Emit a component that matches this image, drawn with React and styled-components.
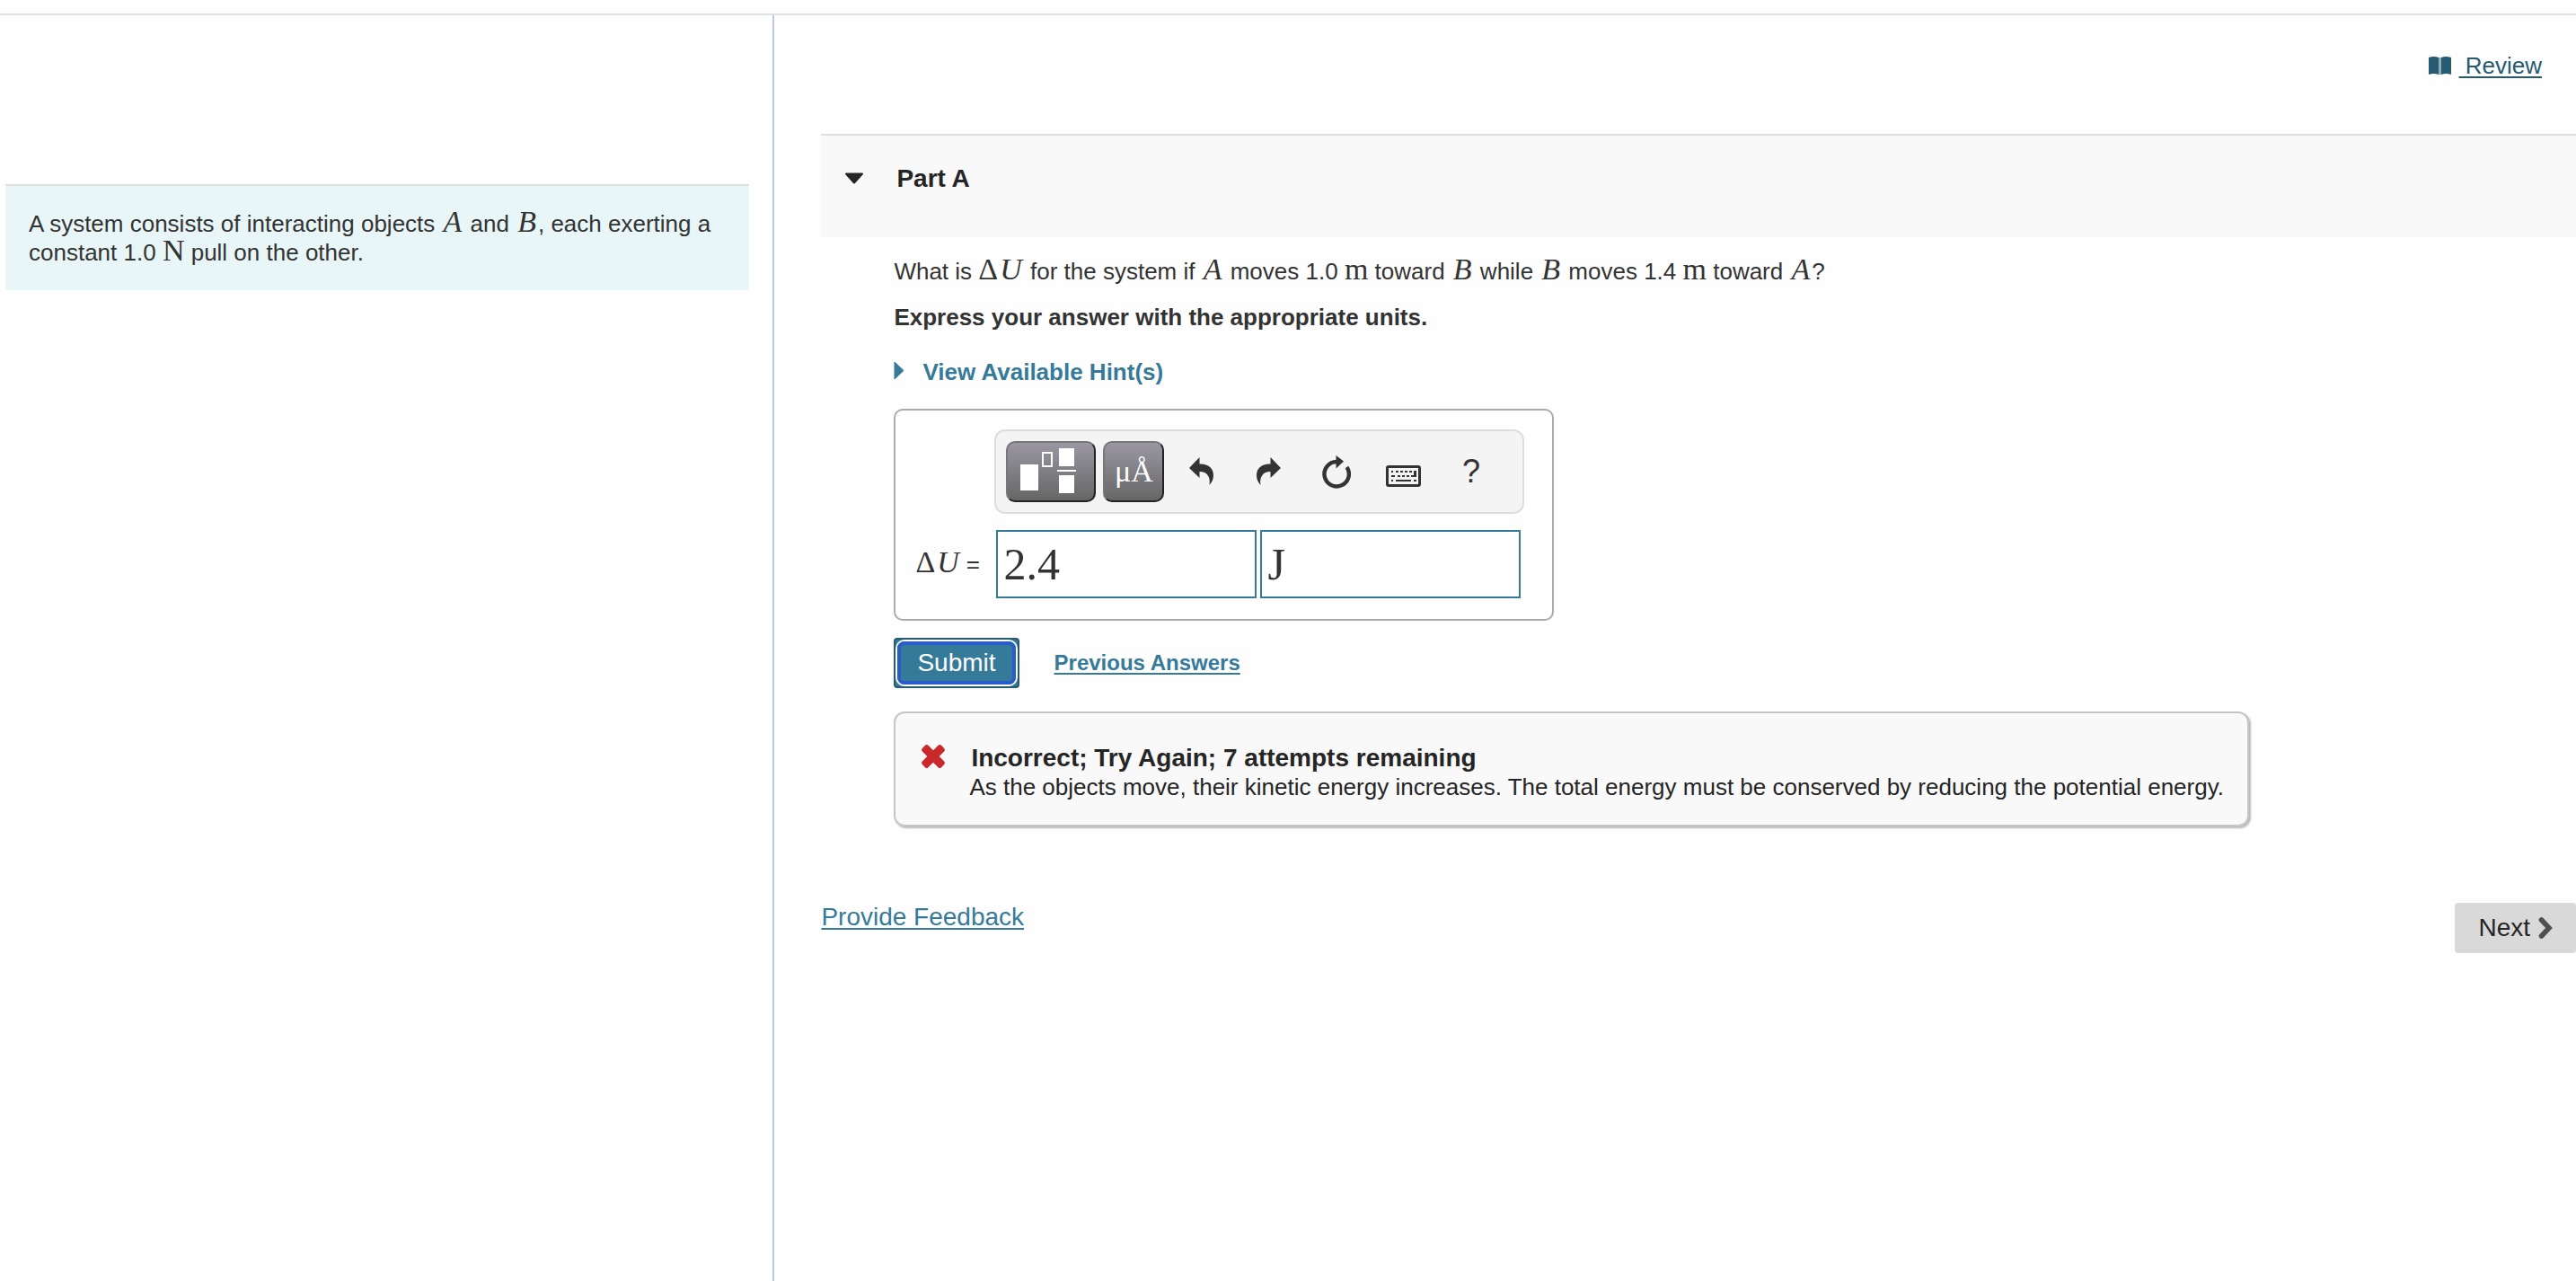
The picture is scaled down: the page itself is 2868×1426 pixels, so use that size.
import React, { useState } from 'react';
import styled, { createGlobalStyle } from 'styled-components';

const GlobalStyle = createGlobalStyle`
  * {
    box-sizing: border-box;
  }
  body {
    margin: 0;
    background: #fefefe;
    color: #333;
    font: 26px/32px 'Liberation Sans', Arial, sans-serif;
  }
  p,
  h2 {
    margin: 0;
  }
  button,
  input {
    font-family: inherit;
    color: inherit;
  }
`;

function App() {
  const [value, setValue] = useState('2.4');
  const [units, setUnits] = useState('J');

  return (
    <>
      <GlobalStyle />
      <Page>
        <Sidebar>
          <Problem>
            A system consists of interacting objects <Var>A</Var> and{' '}
            <Var>B</Var>, each exerting a constant 1.0 <Unit>N</Unit> pull on
            the other.
          </Problem>
        </Sidebar>
        <Main>
          <TopRow>
            <BookIcon />
            <ReviewLink href="#review">&nbsp;Review</ReviewLink>
          </TopRow>
          <PartHeader>
            <Toggle aria-label="Collapse Part A">
              <svg width="22" height="13" viewBox="0 0 22 13">
                <path d="M2 1.500h18L11 11.500z" fill="#252525" stroke="#252525" strokeWidth="2" strokeLinejoin="round" />
              </svg>
            </Toggle>
            <PartTitle>Part A</PartTitle>
          </PartHeader>
          <PartBody>
            <Question>
              What is <Unit>Δ</Unit>
              <Var>U</Var> for the system if <Var>A</Var> moves 1.0{' '}
              <Unit>m</Unit> toward <Var>B</Var> while <Var>B</Var> moves 1.4{' '}
              <Unit>m</Unit> toward <Var>A</Var>?
            </Question>
            <Instructions>Express your answer with the appropriate units.</Instructions>
            <HintButton>
              <svg width="12" height="21" viewBox="0 0 12 21">
                <path d="M1 1l10 9.500L1 20z" fill="#367a99" stroke="#367a99" strokeLinejoin="round" />
              </svg>
              View Available Hint(s)
            </HintButton>
            <AnswerBox>
              <Toolbar>
                <PaletteButton $wide aria-label="Templates">
                  <TemplateIcon />
                </PaletteButton>
                <PaletteButton>μÅ</PaletteButton>
                <IconButton aria-label="Undo">
                  <CurvedArrow />
                </IconButton>
                <IconButton aria-label="Redo">
                  <CurvedArrow flip />
                </IconButton>
                <IconButton aria-label="Reset">
                  <ResetIcon />
                </IconButton>
                <IconButton aria-label="Keyboard shortcuts">
                  <KeyboardIcon />
                </IconButton>
                <IconButton>?</IconButton>
              </Toolbar>
              <AnswerLabel htmlFor="value">
                <span>
                  <Unit>Δ</Unit>
                  <Var>U</Var>
                </span>
                <span>=</span>
              </AnswerLabel>
              <Fields>
                <AnswerInput id="value" value={value} onChange={(e) => setValue(e.target.value)} />
                <AnswerInput aria-label="Units" value={units} onChange={(e) => setUnits(e.target.value)} />
              </Fields>
            </AnswerBox>
            <Actions>
              <SubmitButton>
                <SubmitRing>Submit</SubmitRing>
              </SubmitButton>
              <PreviousLink href="#previous">Previous Answers</PreviousLink>
            </Actions>
            <Feedback>
              <CrossIcon />
              <div>
                <FeedbackTitle>Incorrect; Try Again; 7 attempts remaining</FeedbackTitle>
                <p>
                  As the objects move, their kinetic energy increases. The total
                  energy must be conserved by reducing the potential energy.
                </p>
              </div>
            </Feedback>
          </PartBody>
          <Footer>
            <FeedbackLink href="#feedback">Provide Feedback</FeedbackLink>
            <NextButton>
              Next
              <svg width="16" height="26" viewBox="0 0 16 26">
                <path d="M3.500 4l8.500 9-8.500 9" fill="none" stroke="#505050" strokeWidth="5.600" strokeLinecap="round" />
              </svg>
            </NextButton>
          </Footer>
        </Main>
      </Page>
    </>
  );
}

export default App;

function BookIcon() {
  return (
    <svg width="25" height="21" viewBox="0 0 25 21">
      <path d="M0 1Q6 -1 11 1V20Q6 18 0 20zM14 1Q19 -1 25 1V20Q19 18 14 20z" fill="#255a70" />
      <path d="M11 1h3v19h-3z" fill="#8fabb7" />
    </svg>
  );
}

function TemplateIcon() {
  return (
    <svg width="68" height="52" viewBox="0 0 68 52" fill="#fff">
      <path d="M0 18h20v29H0zM43 0h17v20H43zM41 24h21v2H41zM43 30h17v20H43z" />
      <path d="M25 5h10v15H25z" fill="none" stroke="#fff" strokeWidth="2" />
    </svg>
  );
}

function CurvedArrow({ flip }) {
  return (
    <svg width="27" height="32" viewBox="0 0 27 32">
      <path
        d="M0 12L11.500 0V7.500C21 7 27 12 27 20C27 25 25 28 22.500 31C24 22 20 16 11.500 16V23z"
        fill="#333"
        transform={flip ? 'translate(27 0) scale(-1 1)' : undefined}
      />
    </svg>
  );
}

function ResetIcon() {
  return (
    <svg width="32" height="37" viewBox="0 0 32 37">
      <path d="M16 7A13.700 13.700 0 1 0 27.500 13" fill="none" stroke="#333" strokeWidth="4.400" />
      <path d="M15.500 0l8.500 6.500-8.500 8z" fill="#333" />
    </svg>
  );
}

function KeyboardIcon() {
  return (
    <svg width="39" height="34" viewBox="0 -10 39 34">
      <rect x="1.500" y="1.500" width="36" height="21" rx="1.500" fill="none" stroke="#333" strokeWidth="3" />
      <path
        d="M6 6h2v2H6zM11 6h3v2h-3zM16 6h3v2h-3zM21 6h3v2h-3zM26 6h3v2h-3zM31 6h3v7h-6v-2h3zM6 11h4v2H6zM13 11h3v2h-3zM18 11h3v2h-3zM23 11h3v2h-3zM6 16h2v2H6zM11 16h17v2H11zM31 16h3v2h-3z"
        fill="#333"
      />
    </svg>
  );
}

function CrossIcon() {
  return (
    <svg width="28" height="28" viewBox="-14 -14 28 28" fill="#c9292d">
      <rect x="-4.700" y="-15" width="9.400" height="30" rx="2.500" transform="rotate(45)" />
      <rect x="-4.700" y="-15" width="9.400" height="30" rx="2.500" transform="rotate(-45)" />
    </svg>
  );
}

const Page = styled.div`
  display: grid;
  grid-template-columns: calc(30% + 2px) 1fr;
  min-height: calc(100vh - 15px);
  margin-top: 15px;
  border-top: 2px solid #e0e0e0;
`;

const Sidebar = styled.aside`
  padding: 188px 26px 0 6px;
  border-right: 2px solid #bccbda;
`;

const Problem = styled.p`
  padding: 26px;
  border-top: 2px solid #e0e0e0;
  background: #e8f6f7;
`;

const Main = styled.main`
  padding-left: 52px;
`;

const Var = styled.i`
  margin: 0 2px;
  font: italic 34px/0 'Liberation Serif', 'Times New Roman', serif;
`;

const Unit = styled.span`
  font: 34px/0 'Liberation Serif', 'Times New Roman', serif;
`;

const TopRow = styled.div`
  display: flex;
  align-items: center;
  justify-content: flex-end;
  gap: 9px;
  height: 132px;
  padding: 0 38px 20px 0;
`;

const ReviewLink = styled.a`
  color: #255a70;
  text-underline-offset: 3px;
  text-decoration-thickness: 2px;
`;

const PartHeader = styled.header`
  display: flex;
  align-items: center;
  gap: 36px;
  height: 115px;
  padding: 0 26px 18px;
  border-top: 2px solid #e0e0e0;
  background: #f9f9f9;
`;

const Toggle = styled.button`
  display: flex;
  padding: 0;
  border: none;
  background: none;
`;

const PartTitle = styled.h2`
  font-size: 28px;
  color: #252525;
`;

const PartBody = styled.section`
  display: flex;
  flex-direction: column;
  align-items: flex-start;
  padding: 22px 0 0 81px;
`;

const Question = styled.p`
  margin-bottom: 19px;
`;

const Instructions = styled.p`
  margin-bottom: 29px;
  font-weight: bold;
`;

const HintButton = styled.button`
  display: flex;
  align-items: baseline;
  gap: 20px;
  margin-bottom: 25px;
  padding: 0;
  border: none;
  background: none;
  color: #367a99;
  font-size: 26px;
  font-weight: bold;
  line-height: 32px;
`;

const AnswerBox = styled.div`
  display: grid;
  grid-template-columns: 88px auto;
  row-gap: 18px;
  padding: 21px 31px 23px 22px;
  border: 2px solid #aaa;
  border-radius: 10px;
`;

const Toolbar = styled.div`
  grid-column: 2;
  display: flex;
  align-items: center;
  gap: 8px;
  width: 590px;
  height: 94px;
  padding: 0 11px;
  border: 2px solid #ddd;
  border-radius: 12px;
  background: #f4f4f4;
`;

const PaletteButton = styled.button`
  display: flex;
  align-items: center;
  justify-content: center;
  width: ${(props) => (props.$wide ? 100 : 68)}px;
  height: 68px;
  padding: 0;
  border: 2px solid;
  border-color: #777 #222 #222 #777;
  border-radius: 10px;
  background: linear-gradient(#9a97a3, #666);
  color: #fff;
  font-family: 'Liberation Serif', 'Times New Roman', serif;
  font-size: 34px;
`;

const IconButton = styled.button`
  display: flex;
  align-items: center;
  justify-content: center;
  width: 67px;
  height: 68px;
  padding: 0;
  border: none;
  background: none;
  font-size: 36px;
`;

const AnswerLabel = styled.label`
  grid-column: 1;
  display: flex;
  align-items: center;
  gap: 6px;
`;

const Fields = styled.div`
  display: flex;
  gap: 4px;
  padding-left: 2px;
`;

const AnswerInput = styled.input`
  width: 290px;
  height: 76px;
  padding: 0 6px;
  border: 2px solid #367a99;
  background: #fff;
  font-family: 'Liberation Serif', 'Times New Roman', serif;
  font-size: 50px;
`;

const Actions = styled.div`
  display: flex;
  align-items: center;
  gap: 39px;
  margin: 19px 0 26px;
`;

const SubmitButton = styled.button`
  height: 56px;
  padding: 2px;
  border: 2px solid #255a70;
  border-radius: 4px;
  background: #367a99;
  color: #fff;
  font-size: 28px;
`;

const SubmitRing = styled.span`
  display: block;
  padding: 0 18px;
  border: 4px solid #2a5ccb;
  border-radius: 8px;
  box-shadow: 0 0 0 2px #fff;
  line-height: 40px;
`;

const PreviousLink = styled.a`
  color: #367a99;
  font-size: 24px;
  font-weight: bold;
  text-underline-offset: 3px;
  text-decoration-thickness: 2px;
`;

const Feedback = styled.div`
  display: flex;
  gap: 26px;
  padding: 34px 26px 26px 28px;
  border: 2px solid #c6c6c6;
  border-radius: 12px;
  background: #f9f9f9;
  box-shadow: 2px 2px 2px #bbb;
  color: #252525;
`;

const FeedbackTitle = styled.h2`
  font-size: 28px;
  padding-left: 2px;
`;

const Footer = styled.footer`
  display: flex;
  align-items: flex-start;
  justify-content: space-between;
  padding-top: 85px;
`;

const FeedbackLink = styled.a`
  color: #367a99;
  font-size: 28px;
  text-underline-offset: 3px;
  text-decoration-thickness: 2px;
`;

const NextButton = styled.button`
  display: flex;
  align-items: center;
  gap: 9px;
  height: 56px;
  padding: 0 26px;
  border: none;
  border-radius: 4px;
  background: #d9d9d9;
  color: #252525;
  font-size: 28px;
`;
